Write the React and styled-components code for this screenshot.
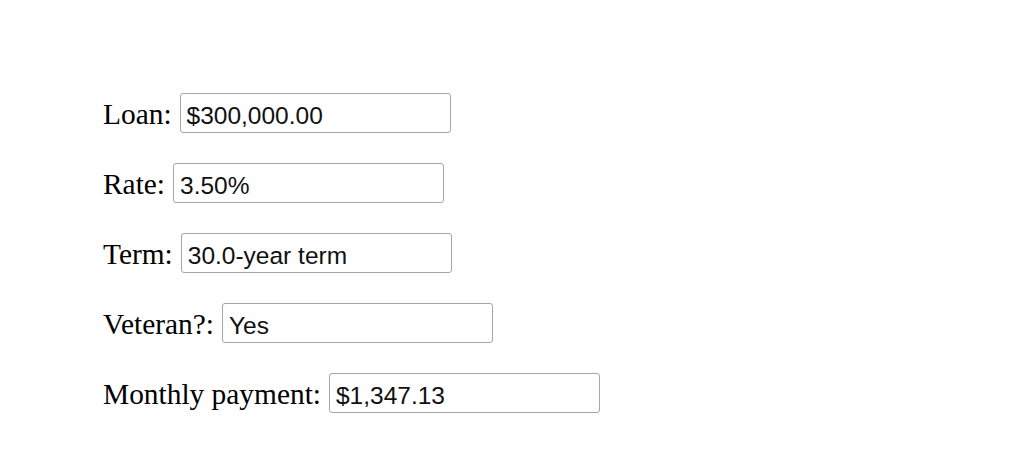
import React from "react";
import styled, { createGlobalStyle } from "styled-components";

const GlobalStyle = createGlobalStyle`
  body {
    margin: 0;
    background: #ffffff;
    font-family: "Liberation Serif", "Times New Roman", serif;
  }
`;

const fields = [
  { label: "Loan:", value: "$300,000.00" },
  { label: "Rate:", value: "3.50%" },
  { label: "Term:", value: "30.0-year term" },
  { label: "Veteran?:", value: "Yes" },
  { label: "Monthly payment:", value: "$1,347.13" },
];

const App = () => {
  return (
    <>
      <GlobalStyle />
      <Calculator>
        {fields.map((field) => (
          <FieldRow key={field.label}>
            <FieldLabel>{field.label}</FieldLabel>
            <FieldInput type="text" defaultValue={field.value} readOnly />
          </FieldRow>
        ))}
      </Calculator>
    </>
  );
};

export default App;

const Calculator = styled.div`
  display: flex;
  flex-direction: column;
  gap: 30px;
  padding: 93px 0 0 103px;
`;

const FieldRow = styled.label`
  display: flex;
  align-items: baseline;
  gap: 8px;
  color: #000;
`;

const FieldLabel = styled.span`
  font-family: "Liberation Serif", "Times New Roman", serif;
  font-size: 29.4px;
  white-space: nowrap;
`;

const FieldInput = styled.input`
  box-sizing: border-box;
  width: 271px;
  height: 40px;
  padding: 7px 6px 1px;
  border: 1px solid #a4a4ac;
  border-radius: 3px;
  font-family: "Liberation Sans", Arial, sans-serif;
  font-size: 24.5px;
  color: #111;
  background: #fff;
  outline: none;
`;
